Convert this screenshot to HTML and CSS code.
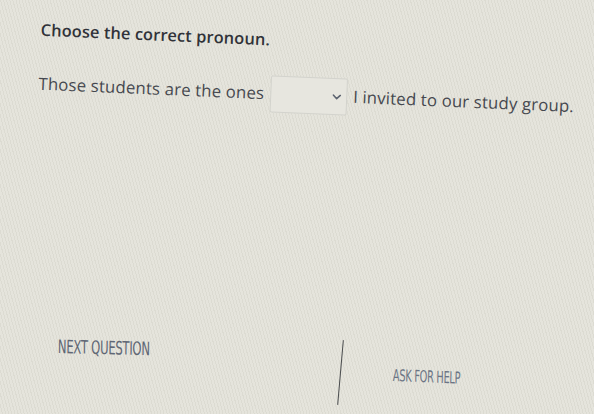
FILE: index.html
```html
<!DOCTYPE html>
<html>
<head>
<meta charset="utf-8">
<link rel="stylesheet" href="styles.css">
</head>
<body>
<div class="page">
  <div class="content">
    <h1 class="title">Choose the correct pronoun.</h1>
    <p class="sentence">
      <span class="part">Those students are the ones</span>
      <span class="select"><svg class="chev" width="9" height="6" viewBox="0 0 9 6"><path d="M1 1 L4.5 4.5 L8 1" fill="none" stroke="#5d6470" stroke-width="1.6" stroke-linecap="round" stroke-linejoin="round"/></svg></span>
      <span class="part">I invited to our study group.</span>
    </p>
  </div>
  <div class="footer">
    <div class="next"><span class="next-label">NEXT QUESTION</span></div>
    <div class="divider"></div>
    <div class="help"><span class="help-label">ASK FOR HELP</span></div>
  </div>
</div>
</body>
</html>
```
FILE: styles.css
```css
html, body {
  margin: 0;
  padding: 0;
}
body {
  width: 594px;
  height: 414px;
  overflow: hidden;
  background: #e3e2da;
  font-family: "Open Sans", "Lato", sans-serif;
}
.page {
  width: 594px;
  height: 414px;
  display: flex;
  flex-direction: column;
  background: repeating-linear-gradient(75deg, #e5e4dc 0px, #e5e4dc 2px, #dcdbd2 2px, #dcdbd2 3px);
}
.content {
  padding: 16px 0 0 42px;
  transform: rotate(2.4deg);
  transform-origin: 0 0;
}
.title {
  margin: 0;
  font-size: 16.4px;
  font-weight: 600;
  color: #303238;
  letter-spacing: 0.1px;
}
.sentence {
  margin: 23px 0 0 0;
  display: flex;
  align-items: center;
  gap: 6px;
  font-size: 16.8px;
  letter-spacing: 0.15px;
  color: #45484f;
}
.select {
  width: 77px;
  height: 37px;
  border: 1px solid #d3d3cd;
  border-radius: 2px;
  background: #e7e6df;
  box-sizing: border-box;
  display: flex;
  align-items: center;
  justify-content: flex-end;
  padding-right: 5px;
  margin-top: 2px;
}
.footer {
  margin-top: auto;
  height: 78px;
  display: flex;
}
.next {
  flex: none;
  width: 282px;
  padding: 0 0 0 58px;
}
.next-label {
  display: inline-block;
  font-family: "DejaVu Sans Condensed", "DejaVu Sans", sans-serif;
  font-size: 18.5px;
  color: #5f6775;
  transform: scaleX(0.7) rotate(1deg);
  transform-origin: 0 0;
  letter-spacing: -0.4px;
  white-space: nowrap;
}
.divider {
  flex: none;
  width: 1.3px;
  height: 65px;
  background: #4a4c4e;
  margin: 4px 0 0 0;
  transform: rotate(5deg);
}
.help {
  flex: none;
  padding: 28px 0 0 52px;
}
.help-label {
  display: inline-block;
  font-family: "DejaVu Sans Condensed", "DejaVu Sans", sans-serif;
  font-size: 16.5px;
  color: #6b7484;
  transform: scaleX(0.66) rotate(1.5deg);
  transform-origin: 0 0;
  letter-spacing: -0.4px;
  white-space: nowrap;
}
```
